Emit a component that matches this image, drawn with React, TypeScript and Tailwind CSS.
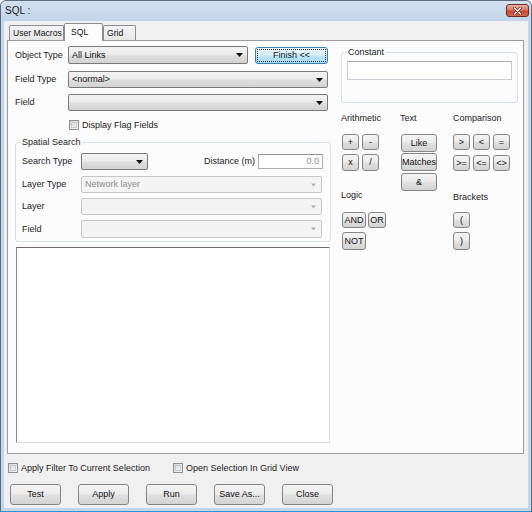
import React from "react";

// small helpers for the classic dialog controls
const label = "text-[9px] leading-[11px] text-[#1a1a1a] whitespace-nowrap";
const btnFace =
  "border border-[#858585] rounded-[3px] bg-[linear-gradient(#f4f4f4,#ececec_45%,#dfdfdf_55%,#d3d3d3)]";

const Arrow = ({ disabled }: { disabled?: boolean }) => (
  <svg width="7" height="4" viewBox="0 0 7 4" className="shrink-0">
    <path d={disabled ? "M1 0.5h5L3.5 3.5z" : "M0 0h7L3.5 4z"} fill={disabled ? "#b0b0b0" : "#111"} />
  </svg>
);

const Combo = ({ className, text, disabled }: { className: string; text?: string; disabled?: boolean }) => (
  <div
    className={`${className} flex items-center justify-between pl-[3px] pr-[4px] rounded-[2px] border text-[9px] leading-[11px] ${
      disabled
        ? "border-[#c3c6cb] bg-[#f4f4f4] text-[#8c8c8c]"
        : "border-[#7a7a7a] bg-[linear-gradient(#f3f3f3,#ececec_45%,#dedede_55%,#d3d3d3)] text-[#111]"
    }`}
  >
    <span>{text}</span>
    <Arrow disabled={disabled} />
  </div>
);

const Btn = ({ className, children }: { className: string; children: React.ReactNode }) => (
  <div className={`${className} ${btnFace} flex items-center justify-center text-[9px] leading-[11px] text-[#111] whitespace-nowrap`}>
    {children}
  </div>
);

const Check = ({ text }: { text: string }) => (
  <div className="flex items-center gap-[3px]">
    <div className="w-[10px] h-[10px] border border-[#8e8f8f] bg-[linear-gradient(135deg,#d8d8d8,#f7f7f7)] p-[1px]">
      <div className="w-full h-full border border-[#c9c9c9]" />
    </div>
    <span className={label}>{text}</span>
  </div>
);

const Group = ({
  className,
  inner,
  title,
  children,
}: {
  className: string;
  inner: string;
  title: string;
  children: React.ReactNode;
}) => (
  <fieldset className={`${className} border border-[#d5dfe5] rounded-[3px]`}>
    <legend className={`${label} ml-[5px] px-[1px]`}>{title}</legend>
    <div className={inner}>{children}</div>
  </fieldset>
);

const Tab = ({ text, active, className }: { text: string; active?: boolean; className: string }) => (
  <div
    className={`${className} flex items-center border border-b-0 rounded-t-[2px] border-[#898c95] text-[8.6px] leading-[11px] text-[#111] whitespace-nowrap ${
      active ? "h-[18px] -mb-[1px] bg-[#fcfcfc] relative z-10 pl-[6px]" : "h-[15px] pl-[3px] bg-[linear-gradient(#f5f5f5,#e6e6e6)]"
    }`}
  >
    {text}
  </div>
);

export default function App() {
  return (
    <div className="w-[532px] h-[512px] flex flex-col bg-[#c5d5ea] border border-[#5d6c80] border-b-[#2f93cf] rounded-t-[6px] font-['Liberation_Sans',Arial,sans-serif] overflow-hidden">
      {/* title bar */}
      <div className="h-[20px] flex items-start justify-between pl-[4px] pr-[2px] bg-[linear-gradient(#d3e0f1,#c3d4ea)]">
        <span className="text-[10px] leading-[11px] mt-[4px] text-[#1b1b1b]">SQL :</span>
        <div className="mt-[3px] w-[23px] h-[13px] rounded-[3px] border border-[#6e2b22] bg-[linear-gradient(#eab1a3,#d67a63_45%,#c4492f_55%,#d26a50)] flex items-center justify-center">
          <svg width="9" height="8" viewBox="0 0 9 8">
            <path d="M1.5 1l6 6M7.5 1l-6 6" stroke="#5a2018" strokeWidth="2.6" strokeLinecap="round" />
            <path d="M1.5 1l6 6M7.5 1l-6 6" stroke="#fff" strokeWidth="1.4" strokeLinecap="round" />
          </svg>
        </div>
      </div>

      {/* client area */}
      <div className="mx-[3px] h-[487px] bg-[#f0f0f0] flex flex-col">
        {/* tabs */}
        <div className="h-[19px] ml-[3px] pl-[2px] flex items-end">
          <Tab text="User Macros" className="w-[55px]" />
          <Tab text="SQL" active className="w-[39px]" />
          <Tab text="Grid" className="w-[33px]" />
        </div>

        {/* tab page */}
        <div className="ml-[3px] w-[517px] h-[414px] border border-[#9a9ca3] bg-[#fcfcfc] flex">
          {/* left column */}
          <div className="ml-[7px] mt-[5px] w-[316px] flex flex-col">
            <div className="flex items-center h-[18px]">
              <span className={`${label} w-[53px]`}>Object Type</span>
              <Combo className="w-[180px] h-[18px]" text="All Links" />
              <div className="ml-[7px] w-[73px] h-[17px] rounded-[3px] border border-[#3c7fb1] bg-[linear-gradient(#eaf6fd,#d9f0fc_45%,#bee6fd_55%,#a7d9f5)] outline-1 outline-dotted outline-[#333] -outline-offset-[3px] flex items-center justify-center text-[9px] leading-[11px] text-[#111]">
                Finish &lt;&lt;
              </div>
            </div>
            <div className="flex items-center mt-[7px]">
              <span className={`${label} w-[53px]`}>Field Type</span>
              <Combo className="w-[260px] h-[17px]" text="<normal>" />
            </div>
            <div className="flex items-center mt-[6px]">
              <span className={`${label} w-[53px]`}>Field</span>
              <Combo className="w-[260px] h-[17px]" />
            </div>
            <div className="mt-[7px] h-[14px] ml-[54px] flex items-center">
              <Check text="Display Flag Fields" />
            </div>

            <Group className="mt-[5px] w-[316px] h-[105px]" inner="pl-[6px] pr-[7px]" title="Spatial Search">
              <div className="flex items-center mt-[5px]">
                <span className={`${label} w-[59px]`}>Search Type</span>
                <Combo className="w-[67px] h-[17px]" />
                <span className={`${label} ml-auto mr-[3px]`}>Distance (m)</span>
                <div className="w-[65px] h-[15px] border border-[#abadb3] border-t-[#8f9299] bg-white flex items-center justify-end pr-[3px] text-[9px] leading-[11px] text-[#8c8c8c]">
                  0.0
                </div>
              </div>
              <div className="flex items-center mt-[6px]">
                <span className={`${label} w-[59px]`}>Layer Type</span>
                <Combo className="w-[241px] h-[17px]" text="Network layer" disabled />
              </div>
              <div className="flex items-center mt-[5px]">
                <span className={`${label} w-[59px]`}>Layer</span>
                <Combo className="w-[241px] h-[17px]" disabled />
              </div>
              <div className="flex items-center mt-[5px]">
                <span className={`${label} w-[59px]`}>Field</span>
                <Combo className="w-[241px] h-[18px]" disabled />
              </div>
            </Group>

            <div className="mt-[5px] ml-[1px] w-[314px] h-[196px] bg-white border border-[#dcdcdc] border-t-[#6b6b6b] border-l-[#8a8a8a]" />
          </div>

          {/* right column */}
          <div className="ml-[10px] mt-[6px] w-[177px] flex flex-col">
            <Group className="w-[177px] h-[56px]" inner="px-[5px]" title="Constant">
              <div className="mt-[3px] w-[165px] h-[19px] bg-white border border-[#c9ccd2] border-t-[#abadb3]" />
            </Group>

            <div className="mt-[10px] flex">
              <div className="w-[59px] flex flex-col">
                <span className={label}>Arithmetic</span>
                <div className="mt-[10px] ml-[1px] flex gap-[3px]">
                  <Btn className="w-[17px] h-[16px]">+</Btn>
                  <Btn className="w-[17px] h-[16px]">-</Btn>
                </div>
                <div className="mt-[4px] ml-[1px] flex gap-[3px]">
                  <Btn className="w-[17px] h-[17px]">x</Btn>
                  <Btn className="w-[17px] h-[17px]">/</Btn>
                </div>
                <span className={`${label} mt-[19px]`}>Logic</span>
                <div className="mt-[11px] ml-[1px] flex gap-[2px]">
                  <Btn className="w-[24px] h-[16px]">AND</Btn>
                  <Btn className="w-[18px] h-[16px]">OR</Btn>
                </div>
                <div className="mt-[4px] ml-[1px] flex">
                  <Btn className="w-[24px] h-[18px]">NOT</Btn>
                </div>
              </div>

              <div className="w-[53px] flex flex-col">
                <span className={label}>Text</span>
                <Btn className="mt-[10px] ml-[1px] w-[36px] h-[18px]">Like</Btn>
                <Btn className="mt-[1px] ml-[1px] w-[36px] h-[18px]">Matches</Btn>
                <Btn className="mt-[2px] ml-[1px] w-[36px] h-[18px]">&amp;</Btn>
              </div>

              <div className="flex-1 flex flex-col">
                <span className={label}>Comparison</span>
                <div className="mt-[10px] flex gap-[3px]">
                  <Btn className="w-[17px] h-[16px]">&gt;</Btn>
                  <Btn className="w-[17px] h-[16px]">&lt;</Btn>
                  <Btn className="w-[17px] h-[16px]">=</Btn>
                </div>
                <div className="mt-[5px] flex gap-[3px]">
                  <Btn className="w-[17px] h-[16px]">&gt;=</Btn>
                  <Btn className="w-[17px] h-[16px]">&lt;=</Btn>
                  <Btn className="w-[17px] h-[16px]">&lt;&gt;</Btn>
                </div>
                <span className={`${label} mt-[21px]`}>Brackets</span>
                <Btn className="mt-[9px] w-[17px] h-[16px]">(</Btn>
                <Btn className="mt-[4px] w-[17px] h-[18px]">)</Btn>
              </div>
            </div>
          </div>
        </div>

        {/* options under the tabs */}
        <div className="mt-[8px] h-[12px] pl-[4px] flex items-center">
          <div className="w-[165px]">
            <Check text="Apply Filter To Current Selection" />
          </div>
          <Check text="Open Selection In Grid View" />
        </div>

        <div className="mt-[10px] pl-[6px] flex gap-[17px]">
          <Btn className="w-[51px] h-[21px]">Test</Btn>
          <Btn className="w-[51px] h-[21px]">Apply</Btn>
          <Btn className="w-[51px] h-[21px]">Run</Btn>
          <Btn className="w-[51px] h-[21px]">Save As...</Btn>
          <Btn className="w-[51px] h-[21px]">Close</Btn>
        </div>
      </div>
    </div>
  );
}
